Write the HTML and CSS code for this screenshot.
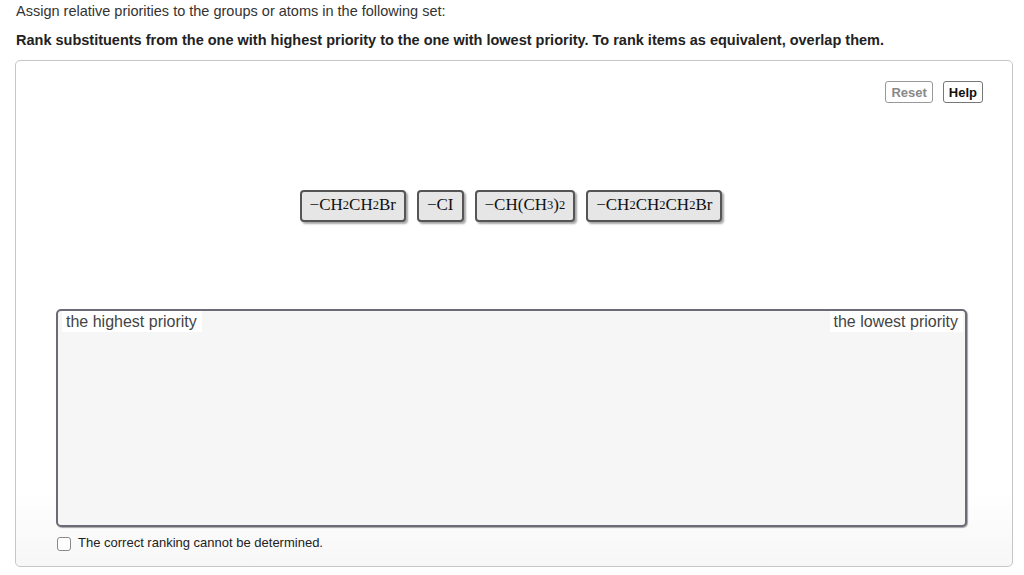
FILE: index.html
```html
<!DOCTYPE html>
<html>
<head>
<meta charset="utf-8">
<link rel="stylesheet" href="styles.css">
</head>
<body>
<div class="page">
  <p class="intro">Assign relative priorities to the groups or atoms in the following set:</p>
  <p class="instr">Rank substituents from the one with highest priority to the one with lowest priority. To rank items as equivalent, overlap them.</p>
  <div class="panel">
    <div class="tools">
      <button class="btn btn-reset">Reset</button>
      <button class="btn">Help</button>
    </div>
    <div class="tiles">
      <div class="tile">−CH<sub>2</sub>CH<sub>2</sub>Br</div>
      <div class="tile">−CI</div>
      <div class="tile">−CH(CH<sub>3</sub>)<sub>2</sub></div>
      <div class="tile">−CH<sub>2</sub>CH<sub>2</sub>CH<sub>2</sub>Br</div>
    </div>
    <div class="rank">
      <span class="label">the highest priority</span>
      <span class="label">the lowest priority</span>
    </div>
    <label class="check"><span class="box"></span>The correct ranking cannot be determined.</label>
  </div>
</div>
</body>
</html>
```

FILE: styles.css
```css
* { box-sizing: border-box; }
body {
  margin: 0;
  background: #fff;
  font-family: "Liberation Sans", Arial, sans-serif;
  color: #222;
}
.page {
  padding: 0 11px 0 15px;
}
.intro {
  margin: 0;
  padding-top: 3px;
  padding-left: 1px;
  font-size: 14.5px;
  line-height: 17px;
  color: #333;
}
.instr {
  margin: 0;
  padding-top: 12px;
  padding-left: 1px;
  font-size: 14.5px;
  line-height: 17px;
  font-weight: bold;
  color: #222;
}
.panel {
  margin-top: 11px;
  height: 507px;
  border: 1px solid #c6c6c6;
  border-radius: 5px;
  background: linear-gradient(to bottom, #fff 85%, #f7f7f7 100%);
  display: flex;
  flex-direction: column;
}
.tools {
  display: flex;
  justify-content: flex-end;
  gap: 10px;
  padding: 20px 29px 0 0;
}
.btn {
  height: 22px;
  padding: 0 5px;
  border: 1px solid #777;
  border-radius: 3px;
  background: #fff;
  font-family: "Liberation Sans", Arial, sans-serif;
  font-size: 13px;
  font-weight: bold;
  color: #111;
}
.btn-reset {
  color: #888;
  border-color: #999;
}
.tiles {
  display: flex;
  justify-content: center;
  gap: 11px;
  margin-top: 87px;
  padding-right: 6px;
}
.tile {
  height: 32px;
  padding: 0 8px 2px;
  display: flex;
  align-items: center;
  border: 2px solid #555;
  border-radius: 4px;
  background: #e6e6e6;
  box-shadow: 2px 2px 2px rgba(0,0,0,0.35);
  font-family: "Liberation Serif", "Times New Roman", serif;
  font-size: 17px;
  color: #111;
  white-space: nowrap;
}
.tile sub {
  font-size: 12.5px;
  vertical-align: -4px;
  line-height: 0;
}
.rank {
  margin: 87px 45px 0 40px;
  height: 218px;
  border: 2px solid #6b6b78;
  border-radius: 5px;
  background: #f6f6f6;
  box-shadow: 1px 1px 1px rgba(0,0,0,0.35);
  display: flex;
  justify-content: space-between;
  align-items: flex-start;
  padding: 0 2px 0 4px;
}
.label {
  background: #fff;
  font-size: 16px;
  line-height: 21px;
  color: #444;
  padding: 0 5px 0 4px;
}
.check {
  display: flex;
  align-items: center;
  gap: 7px;
  margin: 7px 0 0 41px;
  font-size: 13px;
  color: #222;
}
.box {
  width: 14px;
  height: 14px;
  border: 1px solid #888;
  border-radius: 3px;
  background: #fff;
  margin-top: 3px;
}
```
